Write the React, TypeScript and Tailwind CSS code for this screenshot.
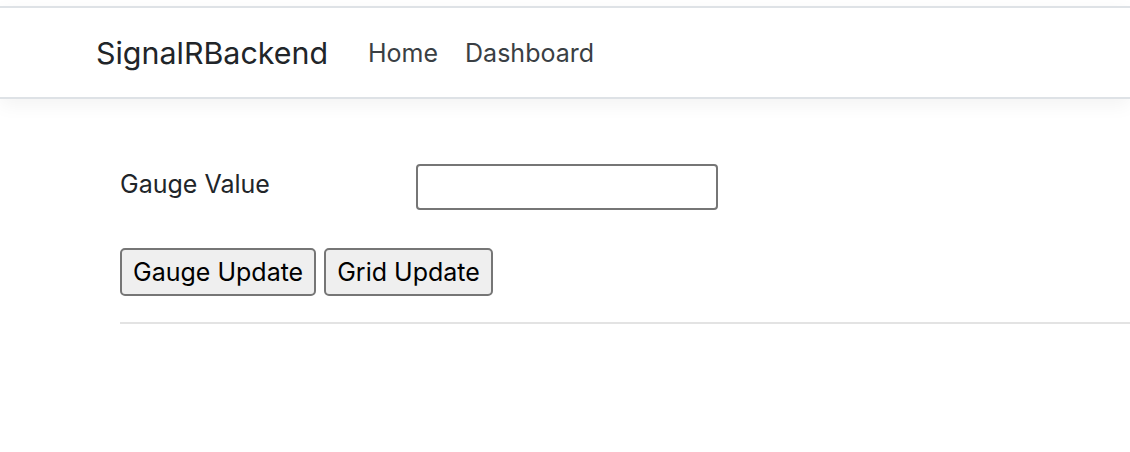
export default function App() {
  return (
    <div className="min-h-[452px] bg-white font-['Inter',sans-serif] text-[#212529]">
      <div className="h-[6px] bg-white" />
      <header className="border-y-2 border-[#dee2e6] bg-white shadow-[0_6px_18px_rgba(0,0,0,0.05)]">
        <nav className="flex h-[89px] items-center pl-[96px]">
          <a className="mr-[40px] text-[30.4px] leading-[36px] text-[#212529]">SignalRBackend</a>
          <ul className="flex gap-[27px] text-[25px] leading-[30px] text-[#3a3f44]">
            <li>Home</li>
            <li>Dashboard</li>
          </ul>
        </nav>
      </header>

      <main className="pl-[120px] pt-[65px]">
        <div className="flex items-center">
          <label className="-mt-[7px] w-[296px] text-[25px] leading-[30px]">Gauge Value</label>
          <input
            type="text"
            className="h-[46px] w-[302px] rounded-[4px] border-2 border-[#767676] bg-white px-2 outline-none"
          />
        </div>
        <div className="mt-[38px] flex gap-[8px]">
          <button className="h-[48px] rounded-[5px] border-2 border-[#767676] bg-[#efefef] px-[11px] text-[25px] leading-[30px] text-black">
            Gauge Update
          </button>
          <button className="h-[48px] rounded-[5px] border-2 border-[#767676] bg-[#efefef] px-[11px] text-[25px] leading-[30px] text-black">
            Grid Update
          </button>
        </div>
        <hr className="mt-[26px] border-t-2 border-[#e3e3e3]" />
      </main>
    </div>
  )
}
